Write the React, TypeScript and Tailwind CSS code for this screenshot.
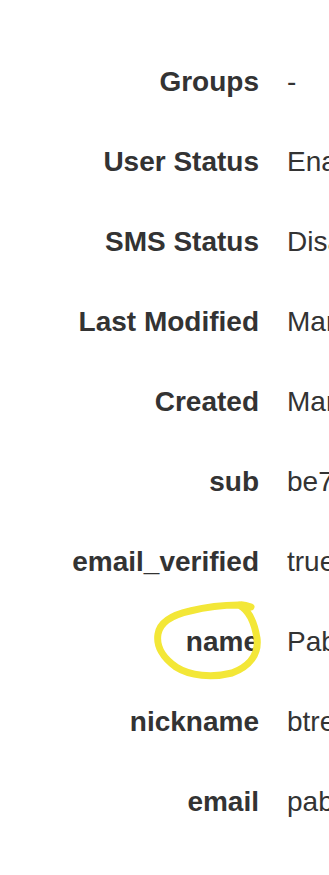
const rows: [string, string][] = [
  ["Groups", "-"],
  ["User Status", "Enabled"],
  ["SMS Status", "Disabled"],
  ["Last Modified", "Mar 12, 2018 10:41:22 AM"],
  ["Created", "Mar 12, 2018 10:41:22 AM"],
  ["sub", "be7a1c2e-4f1d-4b0a-9e3c-2d8f"],
  ["email_verified", "true"],
  ["name", "Pablo"],
  ["nickname", "btreeves"],
  ["email", "pablo@example.com"],
]

// hand-drawn highlight around the "name" label
function Scribble() {
  return (
    <svg
      className="absolute left-[150px] top-[-4px] z-10 pointer-events-none"
      width="120"
      height="84"
      viewBox="0 0 120 84"
      fill="none"
    >
      <path
        d="M101 9 C 96 7, 92 6, 89 7 C 97 11, 104 22, 107 40 C 109 56, 100 68, 82 75 C 62 80, 40 78, 26 69 C 13 60, 6 48, 8 36 C 10 24, 22 17, 40 13 C 56 9, 72 7, 89 7"
        stroke="#f3e737"
        strokeWidth="7"
        strokeLinecap="round"
        strokeLinejoin="round"
      />
    </svg>
  )
}

export default function App() {
  return (
    <main className="w-[329px] h-[875px] overflow-hidden bg-white pt-[42px] font-['Liberation_Sans',Arial,sans-serif] text-[28px] text-[#333333]">
      {rows.map(([label, value]) => (
        <div key={label} className="relative flex h-[80px] leading-[80px] whitespace-nowrap">
          {label === "name" && <Scribble />}
          <div className="w-[259px] shrink-0 text-right font-bold">{label}</div>
          <div className="pl-[28px]">{value}</div>
        </div>
      ))}
    </main>
  )
}
